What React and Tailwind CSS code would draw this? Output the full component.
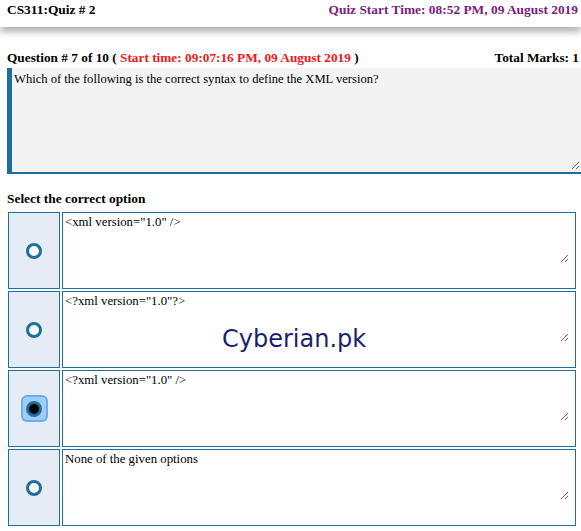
import React from 'react'

const options = [
  { text: '<xml version="1.0" />', selected: false },
  { text: '<?xml version="1.0"?>', selected: false },
  { text: '<?xml version="1.0" />', selected: true },
  { text: 'None of the given options', selected: false },
]

// Draws the radio marker used in the left cell of each option.
function Radio({ selected }) {
  if (selected) {
    return (
      <span className="flex h-[23px] w-[23px] items-center justify-center rounded-[4px] bg-[#9fcdf5] ring-2 ring-[#6aaeee]">
        <span className="h-[16px] w-[16px] rounded-full border-[3px] border-[#1d6f9c] bg-black" />
      </span>
    )
  }
  return <span className="h-[16px] w-[16px] rounded-full border-[3px] border-[#1d6f9c] bg-white" />
}

export default function App() {
  return (
    <div className="relative h-[531px] w-[581px] overflow-hidden bg-white font-['Liberation_Serif',serif] text-black">
      {/* Quiz header bar */}
      <div className="flex h-[27px] items-start justify-between pl-[7px] pr-[3px] pt-[1px] text-[13.4px] font-bold leading-[18px] shadow-[0_5px_7px_rgba(0,0,0,0.3)]">
        <span>CS311:Quiz # 2</span>
        <span className="text-[#7d1c7b]">Quiz Start Time: 08:52 PM, 09 August 2019</span>
      </div>

      {/* Question title row */}
      <div className="mt-[23px] flex items-end justify-between pl-[7px] text-[13.3px] font-bold leading-[15px]">
        <span>
          Question # 7 of 10 ( <span className="text-[#f01818]">Start time: 09:07:16 PM, 09 August 2019</span> )
        </span>
        <span className="pr-[2px]">Total Marks: 1</span>
      </div>

      {/* Question text box */}
      <div className="ml-[7px] mt-[3px] h-[106px] border-b-2 border-l-[5px] border-[#1d6f9c] bg-[#f3f3f3]">
        <textarea
          readOnly
          defaultValue="Which of the following is the correct syntax to define the XML version?"
          className="block h-[102px] w-[568px] resize border-0 bg-transparent px-[2px] pt-[4px] font-['Liberation_Serif',serif] text-[12.6px] leading-[15px] outline-none"
        />
      </div>

      <div className="mt-[17px] pl-[7px] text-[13.4px] font-bold leading-[15px]">Select the correct option</div>

      {/* Options */}
      <div className="mt-[6px] flex flex-col gap-[2px] pl-[8px]">
        {options.map((o, i) => (
          <div key={i} className="flex h-[77px] gap-[2px]">
            <div className="flex w-[52px] items-center justify-center border border-[#1d6f9c] bg-[#e5ecf6]">
              <Radio selected={o.selected} />
            </div>
            <div className="h-[77px] w-[514px] border border-[#1d6f9c] bg-white">
              <textarea
                readOnly
                defaultValue={o.text}
                className="block h-[50px] w-[506px] resize border-0 bg-transparent px-[2px] pt-[2px] font-['Liberation_Serif',serif] text-[12.8px] leading-[15px] outline-none"
              />
            </div>
          </div>
        ))}
      </div>

      {/* Watermark */}
      <div className="pointer-events-none absolute left-[222px] top-[325px] font-['DejaVu_Sans',sans-serif] text-[24px] leading-[28px] text-[#1a1f70]">
        Cyberian.pk
      </div>
    </div>
  )
}
